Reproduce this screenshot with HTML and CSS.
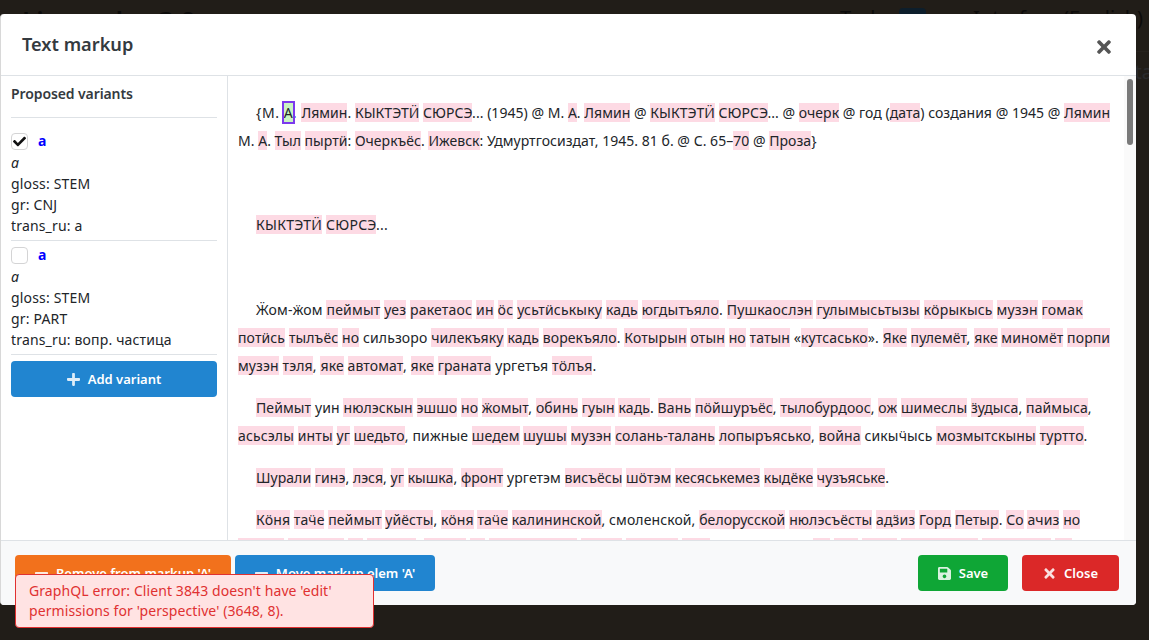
FILE: index.html
```html
<!DOCTYPE html>
<html lang="en">
<head>
<meta charset="utf-8">
<title>Text markup</title>
<link rel="stylesheet" href="styles.css">
</head>
<body>
<header class="page-nav">
  <div class="logo">Lingvodoc 3.0</div>
  <div class="nav-item tasks">Tasks</div>
  <div class="badge"></div>
  <div class="nav-item lang">Interface (English)</div>
</header>
<div class="page-sub">Dictionaries data</div>

<section class="modal">
  <header class="modal-head">
    <h1>Text markup</h1>
    <svg class="head-close" viewBox="0 0 352 512"><path d="M242.72 256l100.07-100.07c12.28-12.28 12.28-32.19 0-44.48l-22.24-22.24c-12.28-12.28-32.19-12.28-44.48 0L176 189.28 75.93 89.21c-12.28-12.28-32.19-12.28-44.48 0L9.21 111.45c-12.28 12.28-12.28 32.19 0 44.48L109.28 256 9.21 356.07c-12.28 12.28-12.28 32.19 0 44.48l22.24 22.24c12.28 12.28 32.2 12.28 44.48 0L176 322.72l100.07 100.07c12.28 12.28 32.2 12.28 44.48 0l22.24-22.24c12.28-12.28 12.28-32.19 0-44.48L242.72 256z"/></svg>
  </header>
  <div class="modal-body">
    <aside class="side">
      <h2>Proposed variants</h2>
      <div class="variant">
        <div class="variant-top">
          <span class="check">
            <svg viewBox="0 0 512 512"><path d="M173.898 439.404l-166.4-166.4c-9.997-9.997-9.997-26.206 0-36.204l36.203-36.204c9.997-9.998 26.207-9.998 36.204 0L192 312.69 432.095 72.596c9.997-9.997 26.207-9.997 36.204 0l36.203 36.204c9.997 9.997 9.997 26.206 0 36.204l-294.4 294.401c-9.998 9.997-26.207 9.997-36.204-.001z"/></svg>
          </span>
          <b class="lemma">a</b>
        </div>
        <div class="row"><i>a</i></div>
        <div class="row">gloss: STEM</div>
        <div class="row">gr: CNJ</div>
        <div class="row">trans_ru: a</div>
      </div>
      <div class="variant">
        <div class="variant-top">
          <span class="check"></span>
          <b class="lemma">a</b>
        </div>
        <div class="row"><i>a</i></div>
        <div class="row">gloss: STEM</div>
        <div class="row">gr: PART</div>
        <div class="row">trans_ru: вопр. частица</div>
      </div>
      <button class="btn btn-blue btn-wide">
        <svg class="ic" viewBox="0 0 448 512"><path d="M416 208H272V64c0-17.67-14.33-32-32-32h-32c-17.67 0-32 14.33-32 32v144H32c-17.67 0-32 14.33-32 32v32c0 17.67 14.33 32 32 32h144v144c0 17.67 14.33 32 32 32h32c17.67 0 32-14.33 32-32V304h144c17.67 0 32-14.33 32-32v-32c0-17.67-14.33-32-32-32z"/></svg>
        Add variant
      </button>
    </aside>
    <div class="doc-wrap">
    <main class="doc">
      <p class="biblio"><span class="open">{М. </span><span class="m cur">А</span><span class="open">. </span><span class="m">Лямин</span>. <span class="m">КЫКТЭТӤ</span> <span class="m">СЮРСЭ</span>... (1945) @ М. <span class="m">А</span>. <span class="m">Лямин</span> @ <span class="m">КЫКТЭТӤ</span> <span class="m">СЮРСЭ</span>... @ <span class="m">очерк</span> @ год (<span class="m">дата</span>) создания @ 1945 @ <span class="m">Лямин</span> М. <span class="m">А</span>. <span class="m">Тыл</span> <span class="m">пыртӥ</span>: <span class="m">Очеркъёс</span>. <span class="m">Ижевск</span>: Удмуртгосиздат, 1945. 81 б. @ С. 65–<span class="m">70</span> @ <span class="m">Проза</span>}</p>
      <p class="blank"></p>
      <p class="title-line"><span class="m">КЫКТЭТӤ</span> <span class="m">СЮРСЭ</span>...</p>
      <p class="blank blank-tall"></p>
      <p class="wide">Ӝом-ӝом <span class="m">пеймыт</span> <span class="m">уез</span> <span class="m">ракетаос</span> <span class="m">ин</span> <span class="m">ӧс</span> <span class="m">усьтӥськыку</span> <span class="m">кадь</span> <span class="m">югдытъяло</span>. <span class="m">Пушкаослэн</span> <span class="m">гулымысьтызы</span> <span class="m">кӧрыкысь</span> <span class="m">музэн</span> <span class="m">гомак</span> <span class="mid"><span class="m">потӥсь</span> <span class="m">тылъёс</span> <span class="m">но</span> сильзоро <span class="m">чилекъяку</span> <span class="m">кадь</span> <span class="m">ворекъяло</span>. <span class="m">Котырын</span> <span class="m">отын</span> <span class="m">но</span> <span class="m">татын</span> «<span class="m">кутсасько</span>». <span class="m">Яке</span> <span class="m">пулемёт</span>, <span class="m">яке</span> <span class="m">миномёт</span> <span class="m">порпи</span> <span class="m">музэн</span> <span class="m">тэля</span>, <span class="m">яке</span> <span class="m">автомат</span>, <span class="m">яке</span> <span class="m">граната</span> ургетъя <span class="m">тӧлъя</span>.</span></p>
      <p class="p-four"><span class="m">Пеймыт</span> уин <span class="m">нюлэскын</span> <span class="m">эшшо</span> <span class="m">но</span> <span class="m">ӝомыт</span>, <span class="m">обинь</span> <span class="m">гуын</span> <span class="m">кадь</span>. <span class="m">Вань</span> <span class="m">пӧйшуръёс</span>, <span class="m">тылобурдоос</span>, <span class="m">ож</span> <span class="m">шимеслы</span> <span class="m">ӟудыса</span>, <span class="m">паймыса</span>, <span class="mid-2"><span class="m">асьсэлы</span> <span class="m">инты</span> <span class="m">уг</span> <span class="m">шедьто</span>, пижные <span class="m">шедем</span> <span class="m">шушы</span> <span class="m">музэн</span> <span class="m">солань-талань</span> <span class="m">лопыръясько</span>, <span class="m">война</span> сикыӵысь <span class="m">мозмытскыны</span> <span class="m">туртто</span>.</span></p>
      <p class="narrow"><span class="m">Шурали</span> <span class="m">гинэ</span>, <span class="m">лэся</span>, <span class="m">уг</span> <span class="m">кышка</span>, <span class="m">фронт</span> ургетэм <span class="m">висъёсы</span> <span class="m">шӧтэм</span> <span class="m">кесяськемез</span> <span class="m">кыдёке</span> <span class="m">чузъяське</span>.</p>
      <p><span class="m">Кӧня</span> <span class="m">таӵе</span> <span class="m">пеймыт</span> <span class="m">уйёсты</span>, <span class="m">кӧня</span> <span class="m">таӵе</span> <span class="m">калининской</span>, смоленской, <span class="m">белорусской</span> <span class="m">нюлэсъёсты</span> <span class="m">адӟиз</span> <span class="m">Горд</span> <span class="m">Петыр</span>. <span class="m">Со</span> <span class="m">ачиз</span> <span class="m">но</span> <span class="m">шуизы</span> <span class="m">потылэз</span> <span class="m">со</span> <span class="m">вордӥз</span>, <span class="m">тодмо</span> <span class="m">со</span> <span class="m">шуралиосын</span> <span class="m">сокем</span> <span class="m">кадьгес</span> <span class="m">мон</span> ваньзэ адӟем, <span class="m">но</span> <span class="m">уно</span> <span class="m">пумо</span> <span class="m">кышкытэсь</span> <span class="m">шудэмъёс</span> <span class="m">но</span></p>
    </main>
    <div class="scrollbar"><div class="thumb"></div></div>
    </div>
  </div>
  <footer class="modal-foot">
    <div class="foot-group">
      <button class="btn btn-orange btn-remove">
        <svg class="ic" viewBox="0 0 448 512"><path d="M416 208H32c-17.67 0-32 14.33-32 32v32c0 17.67 14.33 32 32 32h384c17.67 0 32-14.33 32-32v-32c0-17.67-14.33-32-32-32z"/></svg>
        Remove from markup 'A'
      </button>
      <button class="btn btn-blue btn-move">
        <svg class="ic" viewBox="0 0 448 512"><path d="M416 208H32c-17.67 0-32 14.33-32 32v32c0 17.67 14.33 32 32 32h384c17.67 0 32-14.33 32-32v-32c0-17.67-14.33-32-32-32z"/></svg>
        Move markup elem 'A'
      </button>
    </div>
    <div class="foot-group foot-right">
      <button class="btn btn-green btn-save">
        <svg class="ic" viewBox="0 0 448 512"><path d="M433.941 129.941l-83.882-83.882A48 48 0 0 0 316.118 32H48C21.49 32 0 53.49 0 80v352c0 26.51 21.49 48 48 48h352c26.51 0 48-21.49 48-48V163.882a48 48 0 0 0-14.059-33.941zM224 416c-35.346 0-64-28.654-64-64 0-35.346 28.654-64 64-64s64 28.654 64 64c0 35.346-28.654 64-64 64zm96-304.52V212c0 6.627-5.373 12-12 12H76c-6.627 0-12-5.373-12-12V108c0-6.627 5.373-12 12-12h228.52c3.183 0 6.235 1.264 8.485 3.515l3.48 3.48A11.996 11.996 0 0 1 320 111.48z"/></svg>
        Save
      </button>
      <button class="btn btn-red btn-close">
        <svg class="ic" viewBox="0 0 352 512"><path d="M242.72 256l100.07-100.07c12.28-12.28 12.28-32.19 0-44.48l-22.24-22.24c-12.28-12.28-32.19-12.28-44.48 0L176 189.28 75.93 89.21c-12.28-12.28-32.19-12.28-44.48 0L9.21 111.45c-12.28 12.28-12.28 32.19 0 44.48L109.28 256 9.21 356.07c-12.28 12.28-12.28 32.19 0 44.48l22.24 22.24c12.28 12.28 32.2 12.28 44.48 0L176 322.72l100.07 100.07c12.28 12.28 32.2 12.28 44.48 0l22.24-22.24c12.28-12.28 12.28-32.19 0-44.48L242.72 256z"/></svg>
        Close
      </button>
    </div>
  </footer>
</section>

<div class="toast">GraphQL error: Client 3843 doesn't have 'edit' permissions for 'perspective' (3648, 8).</div>
</body>
</html>
```
FILE: styles.css
```css
* { box-sizing: border-box; }
html, body { margin: 0; height: 100%; }
body {
  background: #211d18;
  font-family: "Noto Sans", sans-serif;
  font-size: 14px;
  color: #212529;
  overflow: hidden;
  position: relative;
}

/* dimmed page behind the dialog */
.page-nav {
  display: flex;
  align-items: flex-start;
  height: 52px;
  padding: 0 0 0 22px;
  border-bottom: 1px solid #26221d;
  color: #0c0b0a;
  white-space: nowrap;
}
.logo { width: 198px; height: 52px; margin-top: 5px; font-size: 26px; font-weight: 600; line-height: 30px; }
.nav-item { font-size: 20px; line-height: 30px; margin-top: 3px; }
.tasks { margin-left: 620px; width: 59px; }
.badge { width: 27px; height: 30px; margin: 8px 0 0 0; background: #0d1e2b; border-radius: 4px; }
.lang { margin-left: 47px; }
.page-sub { padding: 8px 0 0 0; text-align: right; color: #2a2a2c; font-size: 20px; margin-right: -4px; line-height: 24px; }

/* dialog */
.modal {
  position: absolute;
  left: 0;
  top: 14px;
  width: 1136px;
  height: 591px;
  display: flex;
  flex-direction: column;
  background: #fff;
  border-left: 1px solid #d8d8d8;
  border-radius: 4px;
  overflow: hidden;
}
.modal-head {
  flex: 0 0 62px;
  display: flex;
  align-items: center;
  justify-content: space-between;
  padding: 0 25px 0 21px;
  border-bottom: 1px solid #dee2e6;
}
.modal-head h1 { margin: 0 0 2px; font-size: 18.2px; font-weight: 600; color: #343a40; line-height: 30px; }
.head-close { width: 14px; height: 20px; fill: #555; margin-top: 5px; }

.modal-body { flex: 1 1 0; min-height: 0; display: flex; }
.side {
  flex: 0 0 227px;
  padding: 7px 10px 0 10px;
  border-right: 1px solid #dee2e6;
}
.side h2 {
  margin: 0;
  height: 35px;
  font-size: 14px;
  font-weight: 600;
  letter-spacing: -.1px;
  line-height: 22px;
  color: #343a40;
  border-bottom: 1px solid #dee2e6;
}
.variant { padding: 6px 0 4px; border-bottom: 1px solid #dee2e6; line-height: 21px; letter-spacing: .17px; }
.side h2 + .variant { padding-top: 15px; }
.variant-top { display: flex; align-items: center; height: 17px; }
.check {
  flex: 0 0 17px;
  width: 17px;
  height: 17px;
  display: flex;
  align-items: center;
  justify-content: center;
  border: 1px solid #d4d4d5;
  border-radius: 4px;
  background: #fff;
}
.check svg { width: 13px; height: 13px; fill: #111; }
.lemma { margin: 0 0 2px 10px; color: #0000ff; font-weight: 700; font-size: 14px; }
.row { white-space: nowrap; }
.variant-top + .row { margin-top: 2px; }

.btn {
  display: inline-flex;
  align-items: center;
  justify-content: center;
  height: 36px;
  border: 0;
  border-radius: 4px;
  color: #fff;
  font-family: inherit;
  font-size: 13px;
  font-weight: 600;
  padding: 0;
}
.ic { width: 13px; height: 15px; fill: rgba(255,255,255,.85); margin-right: 8px; }
.btn-wide { width: 206px; margin-top: 6px; }
.btn-blue { background: #2185d0; }
.btn-orange { background: #f2711c; }
.btn-green { background: #0fa636; }
.btn-red { background: #db2828; }
.btn-remove { width: 216px; }
.btn-move { width: 200px; }
.btn-save { width: 90px; }
.btn-close { width: 97px; }

/* document text */
.doc-wrap { flex: 1 1 0; min-width: 0; display: flex; }
.doc {
  flex: 1 1 0;
  min-width: 0;
  overflow: hidden;
  padding: 23px 10px 0;
  color: #212529;
  line-height: 28px;
  letter-spacing: .09px;
}
.scrollbar { flex: 0 0 12px; padding: 3px; background: #fafafa; }
.thumb { height: 66px; background: #7a7a7a; border-radius: 3px; }
.doc p { margin: 0 0 14px; text-indent: 18px; }
.doc p.biblio { letter-spacing: .03px; }
.doc p.biblio .open { letter-spacing: .6px; }
.doc p.title-line { letter-spacing: .25px; }
.doc p.wide { letter-spacing: .2px; }
.doc p.p-four { letter-spacing: .105px; }
.doc p.narrow { letter-spacing: .05px; }
.doc p .mid { letter-spacing: .12px; }
.doc p .mid-2 { letter-spacing: .14px; }
.doc p.blank { height: 28px; }
.doc p.blank-tall { height: 29px; }
.m { background: #fddae4; }
.cur { background: #c9f5c1; outline: 2px solid #7c3aed; }

.modal-foot {
  flex: 0 0 65px;
  display: flex;
  justify-content: space-between;
  padding: 14px 17px 0 14px;
  background: #f8f9fa;
  border-top: 1px solid #dee2e6;
}
.foot-group { display: flex; gap: 4px; }
.foot-right { gap: 14px; }

.toast {
  position: absolute;
  left: 15px;
  top: 574px;
  width: 359px;
  height: 54px;
  padding: 6px 13px;
  line-height: 20px;
  letter-spacing: .09px;
  color: #e03131;
  background: #ffe3e3;
  border: 1px solid #e03131;
  border-radius: 4px;
}
```
